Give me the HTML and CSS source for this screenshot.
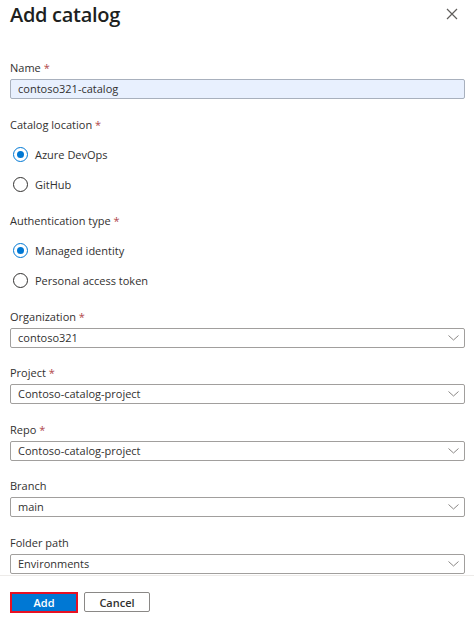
FILE: index.html
```html
<!DOCTYPE html>
<html lang="en">
<head>
<meta charset="utf-8">
<title>Add catalog</title>
<link rel="stylesheet" href="styles.css">
</head>
<body>
<div class="panel">
  <div class="header">
    <h1 class="title">Add catalog</h1>
    <svg class="close" width="12" height="12" viewBox="0 0 12 12"><path d="M1 1L11 11M11 1L1 11" stroke="#605e5c" stroke-width="1.2" fill="none"/></svg>
  </div>
  <div class="form">
    <div class="field">
      <div class="label">Name <span class="req">*</span></div>
      <div class="control filled">contoso321-catalog</div>
    </div>
    <div class="group">
      <div class="label">Catalog location <span class="req">*</span></div>
      <div class="radios">
        <div class="radio-row"><span class="radio checked"></span><span>Azure DevOps</span></div>
        <div class="radio-row"><span class="radio"></span><span>GitHub</span></div>
      </div>
    </div>
    <div class="group">
      <div class="label">Authentication type <span class="req">*</span></div>
      <div class="radios">
        <div class="radio-row"><span class="radio checked"></span><span>Managed identity</span></div>
        <div class="radio-row"><span class="radio"></span><span>Personal access token</span></div>
      </div>
    </div>
    <div class="field">
      <div class="label">Organization <span class="req">*</span></div>
      <div class="control select"><span>contoso321</span><svg class="chev" width="11" height="6" viewBox="0 0 11 6"><path d="M0.5 0.5L5.5 5L10.5 0.5" stroke="#8a8886" stroke-width="1" fill="none"/></svg></div>
    </div>
    <div class="field">
      <div class="label">Project <span class="req">*</span></div>
      <div class="control select"><span>Contoso-catalog-project</span><svg class="chev" width="11" height="6" viewBox="0 0 11 6"><path d="M0.5 0.5L5.5 5L10.5 0.5" stroke="#8a8886" stroke-width="1" fill="none"/></svg></div>
    </div>
    <div class="field">
      <div class="label">Repo <span class="req">*</span></div>
      <div class="control select"><span>Contoso-catalog-project</span><svg class="chev" width="11" height="6" viewBox="0 0 11 6"><path d="M0.5 0.5L5.5 5L10.5 0.5" stroke="#8a8886" stroke-width="1" fill="none"/></svg></div>
    </div>
    <div class="field">
      <div class="label">Branch</div>
      <div class="control select"><span>main</span><svg class="chev" width="11" height="6" viewBox="0 0 11 6"><path d="M0.5 0.5L5.5 5L10.5 0.5" stroke="#8a8886" stroke-width="1" fill="none"/></svg></div>
    </div>
    <div class="field last">
      <div class="label">Folder path</div>
      <div class="control select"><span>Environments</span><svg class="chev" width="11" height="6" viewBox="0 0 11 6"><path d="M0.5 0.5L5.5 5L10.5 0.5" stroke="#8a8886" stroke-width="1" fill="none"/></svg></div>
    </div>
  </div>
  <div class="footer">
    <button class="btn primary">Add</button>
    <button class="btn secondary">Cancel</button>
  </div>
</div>
</body>
</html>
```

FILE: styles.css
```css
* { box-sizing: border-box; }
html, body { margin: 0; padding: 0; background: #ffffff; }
body {
  font-family: "Open Sans", "Noto Sans", "Liberation Sans", sans-serif;
  color: #323130;
  font-size: 11px;
}
.panel { width: 474px; }
.header {
  display: flex;
  justify-content: space-between;
  align-items: center;
  height: 30px;
  padding: 0 16px 0 10px;
}
.title {
  margin: 0;
  font-size: 20px;
  font-weight: 600;
  line-height: 30px;
  color: #201f1e;
  letter-spacing: -0.3px;
}
.close { display: block; margin-top: -2px; }
.form {
  padding: 31px 9px 0 10px;
  display: flex;
  flex-direction: column;
}
.field { display: flex; flex-direction: column; gap: 4px; margin-bottom: 18.5px; }
.field.last { margin-bottom: 0; }
.group { margin-bottom: 14px; }
.label { line-height: 14px; height: 14px; color: #323130; }
.req { color: #b0474c; }
.control {
  height: 20px;
  border: 1px solid #a19f9d;
  border-radius: 2px;
  padding: 0 7px;
  line-height: 18px;
  color: #323130;
  display: flex;
  align-items: center;
}
.control.filled { background: #e8f0fe; border-color: #a8b0bd; }
.select { justify-content: space-between; padding-right: 5px; }
.chev { display: block; }
.radios { display: flex; flex-direction: column; margin-top: 8px; }
.radio-row {
  display: flex;
  align-items: center;
  gap: 7px;
  height: 30px;
  font-size: 11px;
}
.radio {
  width: 15px;
  height: 15px;
  border: 1px solid #323130;
  border-radius: 50%;
  margin-left: 3px;
  position: relative;
  flex: none;
}
.radio.checked { border-color: #0078d4; }
.radio.checked::after {
  content: "";
  position: absolute;
  left: 3px;
  top: 3px;
  width: 7px;
  height: 7px;
  border-radius: 50%;
  background: #0078d4;
}
.footer {
  margin-top: 1px;
  border-top: 1px solid #edebe9;
  padding: 16px 10px 0;
  display: flex;
  gap: 6px;
  align-items: center;
}
.btn {
  font-family: inherit;
  font-size: 11px;
  font-weight: 600;
  height: 20px;
  padding: 0;
  border-radius: 2px;
  cursor: pointer;
}
.primary {
  width: 68px;
  height: 21px;
  background: #0078d4;
  color: #ffffff;
  border: 2px solid #e81123;
  border-radius: 0;
}
.secondary {
  width: 66px;
  background: #ffffff;
  color: #323130;
  border: 1px solid #8a8886;
  font-weight: 600;
}
```
